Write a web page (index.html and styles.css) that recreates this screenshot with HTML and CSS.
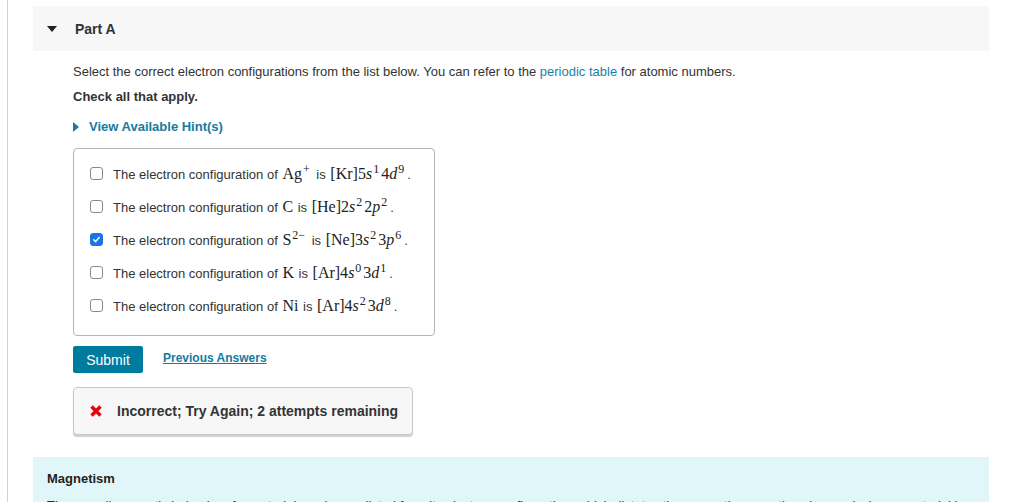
FILE: index.html
```html
<!DOCTYPE html>
<html>
<head>
<meta charset="utf-8">
<link rel="stylesheet" href="styles.css">
</head>
<body>
<div class="page">
  <div class="part-head">
    <span class="caret-down"></span>
    <span class="part-title">Part A</span>
  </div>
  <div class="part-body">
    <p class="intro">Select the correct electron configurations from the list below. You can refer to the <a class="link" href="#">periodic table</a> for atomic numbers.</p>
    <p class="check">Check all that apply.</p>
    <div class="hint"><span class="caret-right"></span><span>View Available Hint(s)</span></div>
    <div class="options">
      <label class="opt"><span class="cb"></span><span>The electron configuration of <span class="m">Ag<sup>+</sup></span> is <span class="m">[Kr]5<i>s</i><sup>1</sup>4<i>d</i><sup>9</sup></span>.</span></label>
      <label class="opt"><span class="cb"></span><span>The electron configuration of <span class="m">C</span> is <span class="m">[He]2<i>s</i><sup>2</sup>2<i>p</i><sup>2</sup></span>.</span></label>
      <label class="opt"><span class="cb on"><svg viewBox="0 0 13 13" width="13" height="13"><path d="M3.3 6.8 L5.5 9 L9.7 4.2" fill="none" stroke="#fff" stroke-width="1.8" stroke-linecap="round" stroke-linejoin="round"/></svg></span><span>The electron configuration of <span class="m">S<sup>2&minus;</sup></span> is <span class="m">[Ne]3<i>s</i><sup>2</sup>3<i>p</i><sup>6</sup></span>.</span></label>
      <label class="opt"><span class="cb"></span><span>The electron configuration of <span class="m">K</span> is <span class="m">[Ar]4<i>s</i><sup>0</sup>3<i>d</i><sup>1</sup></span>.</span></label>
      <label class="opt"><span class="cb"></span><span>The electron configuration of <span class="m">Ni</span> is <span class="m">[Ar]4<i>s</i><sup>2</sup>3<i>d</i><sup>8</sup></span>.</span></label>
    </div>
    <div class="actions">
      <button class="submit">Submit</button>
      <a class="prev" href="#">Previous Answers</a>
    </div>
    <div class="feedback">
      <svg class="xicon" viewBox="0 0 14 14" width="14" height="14"><path d="M2.5 2.5 L11.5 11.5 M11.5 2.5 L2.5 11.5" stroke="#e8000b" stroke-width="3.4" stroke-linecap="butt"/></svg>
      <span>Incorrect; Try Again; 2 attempts remaining</span>
    </div>
  </div>
  <div class="info">
    <h3>Magnetism</h3>
    <p>The overall magnetic behavior of a material can be predicted from its electron configuration, which dictates the magnetic properties observed when a material is placed in a magnetic field.</p>
  </div>
</div>
</body>
</html>
```

FILE: styles.css
```css
html, body {
  margin: 0;
  padding: 0;
  background: #fff;
  height: 100%;
  overflow: hidden;
}
body {
  font-family: "Liberation Sans", Arial, sans-serif;
  color: #333;
}
.page {
  margin-left: 7px;
  border-left: 1px solid #c5d3e2;
  min-height: 100%;
  padding: 6px 26px 0 25px;
  box-sizing: border-box;
}
.part-head {
  background: #f7f7f7;
  height: 45px;
  display: flex;
  align-items: center;
  padding-left: 14px;
}
.caret-down {
  width: 0;
  height: 0;
  border-left: 5px solid transparent;
  border-right: 5px solid transparent;
  border-top: 6px solid #222;
  margin-right: 18px;
  margin-top: 1px;
}
.part-title {
  font-weight: bold;
  font-size: 14px;
  color: #333;
}
.part-body {
  padding-left: 40px;
}
.intro {
  margin: 13px 0 0;
  font-size: 13px;
  line-height: 16px;
}
.link {
  color: #1a7fa6;
  text-decoration: none;
}
.check {
  margin: 9px 0 0;
  font-size: 13px;
  font-weight: bold;
  line-height: 16px;
}
.hint {
  margin-top: 14px;
  display: flex;
  align-items: center;
  font-size: 13px;
  font-weight: bold;
  color: #157ba1;
  line-height: 16px;
}
.caret-right {
  width: 0;
  height: 0;
  border-top: 5px solid transparent;
  border-bottom: 5px solid transparent;
  border-left: 6px solid #157ba1;
  margin-right: 10px;
}
.options {
  margin-top: 13px;
  width: 362px;
  border: 1px solid #b5b5b5;
  border-radius: 4px;
  padding: 8px 0 13px 16px;
  box-sizing: border-box;
  display: flex;
  flex-direction: column;
}
.opt {
  height: 33px;
  display: flex;
  align-items: center;
  font-size: 13px;
  color: #333;
}
.cb {
  width: 11px;
  height: 11px;
  border: 1px solid #8a8a8a;
  border-radius: 3px;
  margin-right: 10px;
  flex: none;
  display: flex;
  align-items: center;
  justify-content: center;
  background: #fff;
}
.cb.on {
  background: #1a73e8;
  border-color: #1a73e8;
}
.cb.on svg {
  width: 11px;
  height: 11px;
}
.m {
  font-family: "Liberation Serif", "DejaVu Serif", serif;
  font-size: 16px;
  color: #222;
  margin: 0 1px;
}
.m i {
  font-style: italic;
}
.m sup {
  font-size: 12px;
  line-height: 0;
  vertical-align: 6px;
  margin-left: 1px;
  margin-right: 2px;
}
.actions {
  margin-top: 10px;
  display: flex;
  align-items: center;
}
.submit {
  width: 70px;
  height: 27px;
  background: #007ba0;
  color: #fff;
  border: none;
  border-radius: 2px;
  font-family: "Liberation Sans", Arial, sans-serif;
  font-size: 14px;
  padding: 0;
  margin-right: 20px;
}
.prev {
  font-size: 12px;
  font-weight: bold;
  color: #157ba1;
  text-decoration: underline;
  margin-top: -3px;
}
.feedback {
  margin-top: 14px;
  width: 340px;
  height: 48px;
  box-sizing: border-box;
  background: #f7f7f7;
  border: 1px solid #c8c8c8;
  border-radius: 4px;
  box-shadow: 0 2px 1px #d0d0d0;
  display: flex;
  align-items: center;
  padding-left: 15px;
  font-size: 14px;
  font-weight: bold;
  color: #333;
}
.xicon {
  margin-right: 14px;
}
.info {
  margin-top: 22px;
  background: #e1f6f8;
  padding: 14px 14px 10px;
}
.info h3 {
  margin: 0;
  font-size: 13px;
  font-weight: bold;
  color: #222;
  line-height: 16px;
}
.info p {
  margin: 11px 0 0;
  font-size: 13px;
  line-height: 16px;
  color: #333;
}
```
